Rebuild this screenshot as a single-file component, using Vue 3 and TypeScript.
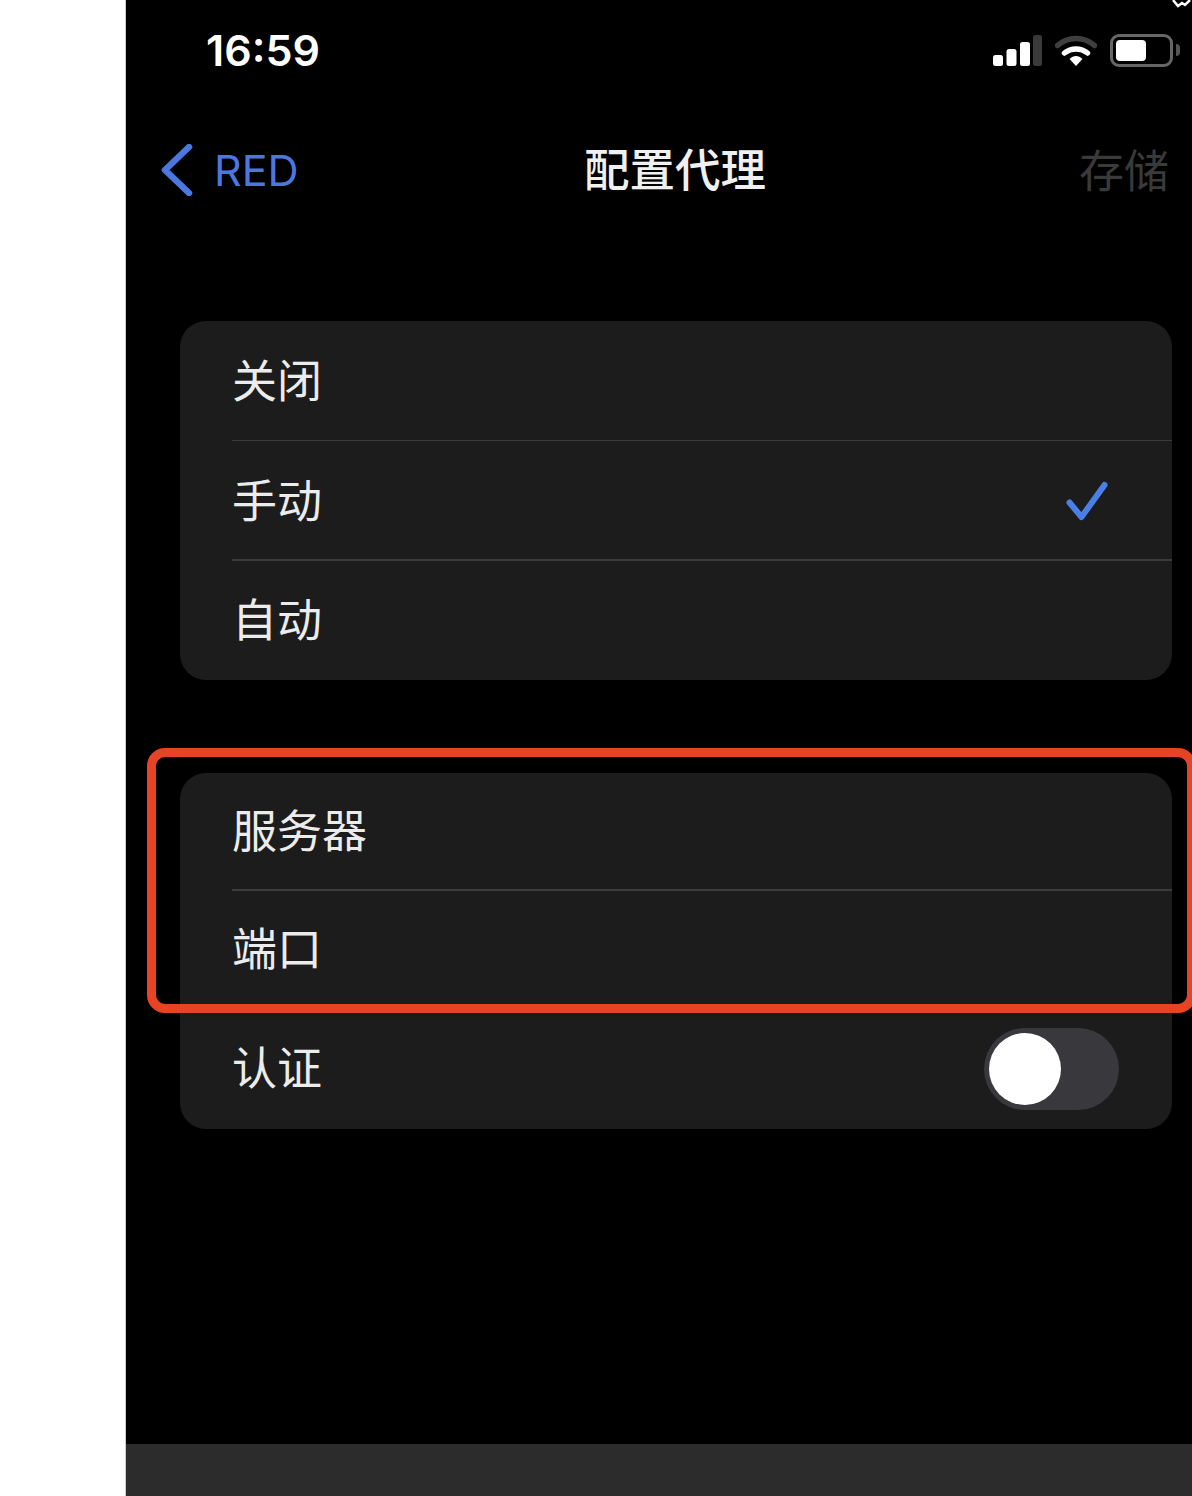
<script setup lang="ts">
const modes = [
  { label: '关闭', checked: false },
  { label: '手动', checked: true },
  { label: '自动', checked: false },
]
</script>

<template>
  <div class="page">
    <div class="phone">
      <header class="status">
        <span class="time">16:59</span>
        <div class="status-icons">
          <svg class="signal" width="50" height="32" viewBox="0 0 50 32">
            <rect x="1" y="21" width="10" height="11" rx="2.5" fill="#fff" />
            <rect x="14.5" y="15" width="10" height="17" rx="2.5" fill="#fff" />
            <rect x="28" y="8" width="10" height="24" rx="2.5" fill="#fff" />
            <rect x="41" y="1" width="9" height="31" rx="2.5" fill="#3a3a3a" />
          </svg>
          <svg class="wifi" width="42" height="32" viewBox="0 0 42 32">
            <path d="M2.5 11.5C13 2 29 2 39.5 11.5" fill="none" stroke="#3f3f3f" stroke-width="5.5" stroke-linecap="round" />
            <path d="M9.5 19C16 13.5 26 13.5 32.5 19" fill="none" stroke="#fff" stroke-width="5.5" stroke-linecap="round" />
            <path d="M14.5 25C18.5 21 23.5 21 27.5 25L21 32Z" fill="#fff" />
          </svg>
          <div class="battery">
            <div class="battery-body"><div class="battery-fill"></div></div>
            <div class="battery-cap"></div>
          </div>
        </div>
      </header>

      <nav class="navbar">
        <div class="back">
          <svg width="32" height="52" viewBox="0 0 32 52">
            <path d="M28 3L4 26L28 49" fill="none" stroke="#4a78e0" stroke-width="6.5" stroke-linecap="round" stroke-linejoin="round" />
          </svg>
          <span>RED</span>
        </div>
        <div class="title">配置代理</div>
        <div class="save">存储</div>
      </nav>

      <section class="card first">
        <div v-for="m in modes" :key="m.label" class="row">
          <span class="label">{{ m.label }}</span>
          <svg v-if="m.checked" class="check" width="44" height="44" viewBox="0 0 44 44">
            <path d="M3.5 21.5L15.5 36L38.5 4" fill="none" stroke="#4a7fe8" stroke-width="6" stroke-linecap="round" stroke-linejoin="round" />
          </svg>
        </div>
      </section>

      <section class="card second">
        <div class="row"><span class="label">服务器</span></div>
        <div class="row"><span class="label">端口</span></div>
        <div class="row">
          <span class="label">认证</span>
          <div class="toggle"><div class="knob"></div></div>
        </div>
      </section>

      <div class="spacer"></div>
      <div class="bottom"></div>
    </div>

    <div class="highlight"></div>
    <svg class="cursor" width="22" height="8" viewBox="0 0 22 8">
      <path d="M2 0L7 6L11 3L14 5L19 0" fill="none" stroke="#fff" stroke-width="2.5" />
    </svg>
  </div>
</template>

<style>
html, body { margin: 0; background: #fff; }
</style>

<style scoped>
.page {
  position: relative;
  width: 1192px;
  height: 1496px;
  overflow: hidden;
  background: #fff;
  font-family: Inter, "Noto Sans CJK SC", sans-serif;
}
.phone {
  margin-left: 125px;
  width: 1067px;
  height: 1496px;
  background: #000;
  display: flex;
  flex-direction: column;
  border-left: 1px solid #ccc;
  box-sizing: border-box;
}
.status {
  height: 100px;
  flex: none;
  display: flex;
  align-items: center;
  justify-content: space-between;
  padding: 0 12px 0 80px;
}
.time {
  color: #fff;
  font-size: 43px;
  font-weight: 600;
}
.status-icons {
  display: flex;
  align-items: center;
  gap: 13px;
}
.battery {
  display: flex;
  align-items: center;
  gap: 3px;
}
.battery-body {
  width: 63px;
  height: 33px;
  box-sizing: border-box;
  border: 3px solid #666;
  border-radius: 9px;
  padding: 3px;
}
.battery-fill {
  width: 30px;
  height: 100%;
  background: #fff;
  border-radius: 4px;
}
.battery-cap {
  width: 4px;
  height: 12px;
  background: #555;
  border-radius: 0 4px 4px 0;
}
.navbar {
  flex: none;
  height: 140px;
  display: grid;
  grid-template-columns: 423px auto 1fr;
  align-items: center;
  padding: 0 23px 0 35px;
}
.back {
  display: flex;
  align-items: center;
  gap: 21px;
  color: #4a78e0;
  font-size: 43px;
}
.title {
  color: #f0f0f0;
  font-size: 45.5px;
  font-weight: 500;
  padding-bottom: 6px;
}
.save {
  justify-self: end;
  color: #3a3a3a;
  font-size: 45px;
  padding-bottom: 4px;
}
.card {
  flex: none;
  margin-left: 54px;
  width: 992px;
  background: #1c1c1c;
  border-radius: 26px;
  color: #ececec;
  font-size: 45px;
}
.first { margin-top: 81px; }
.second { margin-top: 93px; }
.row {
  position: relative;
  height: 119.5px;
  box-sizing: border-box;
  display: flex;
  align-items: center;
  justify-content: space-between;
  padding: 0 53px 0 52px;
}
.second .row { height: 119.25px; }
.second .row:first-child { height: 117.5px; }
.label { padding-bottom: 6px; }
.first .label { padding-bottom: 4px; }
.row + .row::before {
  content: "";
  position: absolute;
  top: -1px;
  left: 52px;
  right: 0;
  height: 1.5px;
  background: #3c3c3e;
}
.check { margin: 6px 9px 0 0; }
.toggle {
  width: 135px;
  height: 82px;
  border-radius: 41px;
  background: #39393d;
  position: relative;
}
.knob {
  position: absolute;
  left: 5px;
  top: 5px;
  width: 72px;
  height: 72px;
  border-radius: 50%;
  background: #fff;
}
.spacer { flex: 1; }
.bottom {
  flex: none;
  height: 52px;
  background: #2c2c2c;
}
.highlight {
  position: absolute;
  left: 147px;
  top: 748px;
  width: 1049px;
  height: 265px;
  box-sizing: border-box;
  border: 9px solid #e94327;
  border-radius: 18px;
}
.cursor {
  position: absolute;
  left: 1171px;
  top: 0;
}
</style>
